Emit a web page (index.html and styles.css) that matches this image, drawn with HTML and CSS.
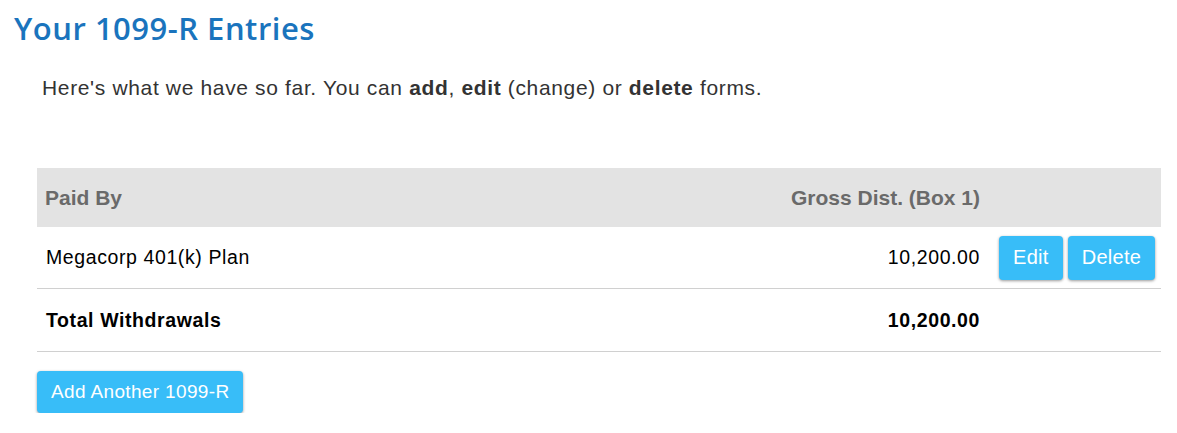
FILE: index.html
```html
<!DOCTYPE html>
<html>
<head>
<meta charset="utf-8">
<link rel="stylesheet" href="styles.css">
</head>
<body>
<div class="page">
  <h1 class="title">Your 1099-R Entries</h1>
  <p class="intro">Here's what we have so far. You can <b>add</b>, <b>edit</b> (change) or <b>delete</b> forms.</p>
  <table class="entries">
    <thead>
      <tr>
        <th class="col-name">Paid By</th>
        <th class="col-amt">Gross Dist. (Box 1)</th>
        <th class="col-act"></th>
      </tr>
    </thead>
    <tbody>
      <tr class="row">
        <td class="col-name">Megacorp 401(k) Plan</td>
        <td class="col-amt">10,200.00</td>
        <td class="col-act"><div class="actions"><button class="btn">Edit</button><button class="btn">Delete</button></div></td>
      </tr>
      <tr class="row total">
        <td class="col-name">Total Withdrawals</td>
        <td class="col-amt">10,200.00</td>
        <td class="col-act"></td>
      </tr>
    </tbody>
  </table>
  <button class="btn add">Add Another 1099-R</button>
</div>
</body>
</html>
```
FILE: styles.css
```css
html, body {
  margin: 0;
  padding: 0;
  background: #ffffff;
}
.page {
  padding: 10px 16px 0 14px;
  font-family: "Liberation Sans", Arial, sans-serif;
}
.title {
  margin: 0;
  font-family: "Open Sans", "Noto Sans", sans-serif;
  font-weight: 600;
  font-size: 31px;
  line-height: 36px;
  color: #1a74bd;
  letter-spacing: 0.5px;
}
.intro {
  margin: 30px 0 0 28px;
  font-size: 21px;
  line-height: 24px;
  letter-spacing: 0.65px;
  color: #333333;
}
.intro b {
  font-weight: bold;
}
.entries {
  margin: 68px 0 0 23px;
  width: 1124px;
  border-collapse: collapse;
}
.entries th {
  background: #e3e3e3;
  color: #6a6a6a;
  font-size: 21px;
  font-weight: bold;
  height: 59px;
  padding: 0 8px;
}
.entries td {
  font-size: 19.5px;
  letter-spacing: 0.6px;
  color: #000000;
  padding: 0 8px;
  border-bottom: 1px solid #d0d0d0;
}
.row td {
  height: 61px;
}
.total td {
  height: 62px;
  font-weight: bold;
}
.col-name {
  text-align: left;
}
.entries td.col-name {
  padding-left: 9px;
}
.col-amt {
  text-align: right;
}
.entries th.col-amt,
.entries td.col-amt {
  padding-right: 10px;
  white-space: nowrap;
}
.entries th.col-act,
.entries td.col-act {
  width: 158px;
  padding: 0 4px 0 9px;
}
.actions {
  display: flex;
  gap: 5px;
}
.btn {
  background: #38bdf8;
  color: #ffffff;
  border: none;
  border-radius: 4px;
  font-family: "Liberation Sans", Arial, sans-serif;
  font-size: 20px;
  letter-spacing: 0.3px;
  height: 44px;
  padding: 0 14px;
  box-shadow: 0 1px 3px rgba(0, 0, 0, 0.4);
  cursor: pointer;
}
.add {
  display: block;
  margin: 19px 0 0 23px;
  height: 42px;
  padding: 0 14px;
  font-size: 19px;
  letter-spacing: 0.35px;
}
```
